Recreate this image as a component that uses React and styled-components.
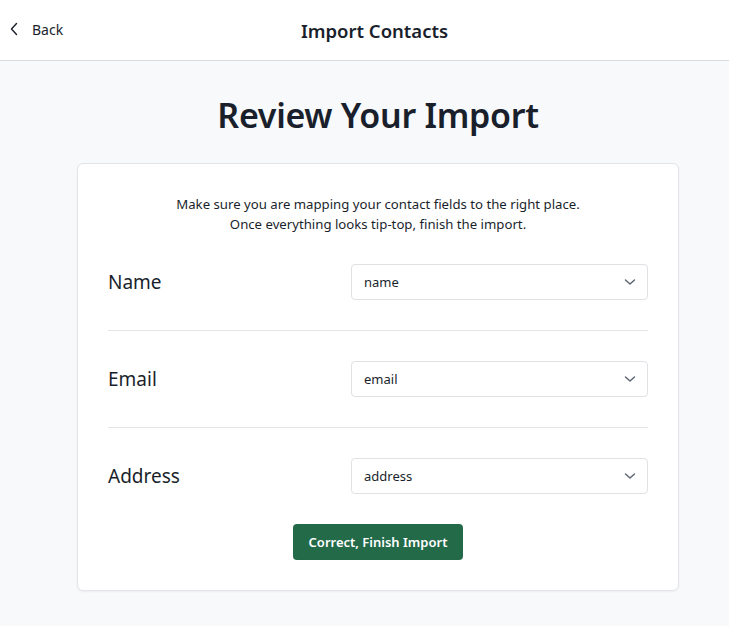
import React from 'react';
import styled, { createGlobalStyle } from 'styled-components';

const GlobalStyle = createGlobalStyle`
  html, body {
    overflow-x: hidden;
  }
  body {
    margin: 0;
    background: #f8f9fb;
    font-family: "Noto Sans", "Open Sans", sans-serif;
    color: #1a1f2c;
  }
  #root {
    min-width: 756px;
  }
`;

const Header = styled.header`
  height: 60px;
  background: #ffffff;
  border-bottom: 1px solid #dcdcdc;
  display: grid;
  grid-template-columns: 1fr auto 1fr;
  align-items: center;
  padding: 0 10px;
`;

const BackLink = styled.a`
  display: flex;
  align-items: center;
  gap: 14px;
  font-size: 14px;
  color: #1a1f2c;
  text-decoration: none;
  margin-top: -2px;
  cursor: pointer;
`;

const HeaderTitle = styled.h1`
  margin: 0 7px 0 0;
  font-size: 18.5px;
  font-weight: 600;
`;

const Main = styled.main`
  display: flex;
  flex-direction: column;
  align-items: center;
  padding: 32px 0 36px;
`;

const PageTitle = styled.h2`
  margin: 0 0 26px;
  font-size: 34px;
  font-weight: 600;
  line-height: 44px;
  letter-spacing: -0.3px;
`;

const Card = styled.section`
  width: 540px;
  padding: 30px;
  background: #ffffff;
  border: 1px solid #e3e5e8;
  border-radius: 6px;
  box-shadow: 0 1px 2px rgba(0, 0, 0, 0.05);
`;

const Intro = styled.p`
  margin: 0;
  text-align: center;
  font-size: 13.2px;
  line-height: 20px;
`;

const Row = styled.div`
  display: grid;
  grid-template-columns: 45% 55%;
  align-items: center;
  padding: 30px 0;
  border-bottom: ${(p) => (p.last ? 'none' : '1px solid #e3e5e8')};
`;

const Label = styled.span`
  font-size: 19px;
`;

const SelectWrap = styled.div`
  position: relative;
`;

const Select = styled.select`
  appearance: none;
  width: 100%;
  height: 36px;
  padding: 0 36px 0 12px;
  background: #ffffff;
  border: 1px solid #dfe1e5;
  border-radius: 4px;
  font-family: inherit;
  font-size: 13px;
  color: #1a1f2c;
`;

const Chevron = styled.svg`
  position: absolute;
  right: 12px;
  top: 13px;
  pointer-events: none;
`;

const Footer = styled.div`
  display: flex;
  justify-content: center;
`;

const Button = styled.button`
  height: 36px;
  padding: 0 16px;
  background: #236a49;
  color: #ffffff;
  border: none;
  border-radius: 4px;
  font-family: inherit;
  font-size: 13px;
  font-weight: 600;
  cursor: pointer;
`;

const fields = [
  { label: 'Name', value: 'name' },
  { label: 'Email', value: 'email' },
  { label: 'Address', value: 'address' },
];

function FieldRow({ label, value, last }) {
  return (
    <Row last={last}>
      <Label>{label}</Label>
      <SelectWrap>
        <Select defaultValue={value}>
          <option value="name">name</option>
          <option value="email">email</option>
          <option value="address">address</option>
        </Select>
        <Chevron width="12" height="10" viewBox="0 0 12 10">
          <path d="M1.5 3 L6 7 L10.5 3" fill="none" stroke="#5f6673" strokeWidth="1.5" strokeLinecap="round" strokeLinejoin="round" />
        </Chevron>
      </SelectWrap>
    </Row>
  );
}

export default function App() {
  return (
    <>
      <GlobalStyle />
      <Header>
        <BackLink>
          <svg width="8" height="14" viewBox="0 0 8 14">
            <path d="M6.5 1.5 L1.5 7 L6.5 12.5" fill="none" stroke="#1a1f2c" strokeWidth="1.4" strokeLinecap="round" strokeLinejoin="round" />
          </svg>
          Back
        </BackLink>
        <HeaderTitle>Import Contacts</HeaderTitle>
        <span />
      </Header>
      <Main>
        <PageTitle>Review Your Import</PageTitle>
        <Card>
          <Intro>
            Make sure you are mapping your contact fields to the right place.
            <br />
            Once everything looks tip-top, finish the import.
          </Intro>
          {fields.map((f, i) => (
            <FieldRow key={f.label} label={f.label} value={f.value} last={i === fields.length - 1} />
          ))}
          <Footer>
            <Button>Correct, Finish Import</Button>
          </Footer>
        </Card>
      </Main>
    </>
  );
}
